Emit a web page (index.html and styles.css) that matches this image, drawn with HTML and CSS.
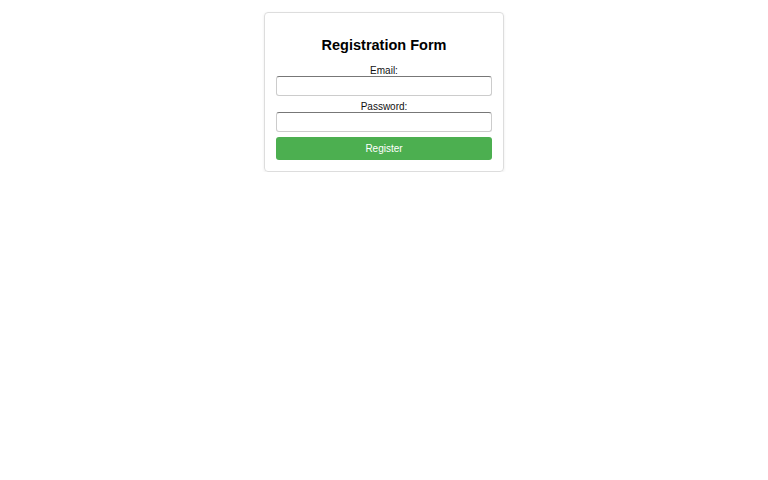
FILE: index.html
```html
<!DOCTYPE html>
<html lang="en">
<head>
  <meta charset="UTF-8">
  <meta name="viewport" content="width=device-width, initial-scale=1.0">
  <title>Registration Form</title>
  <link rel="stylesheet" href="styles.css">
</head>
<body>
  <div class="container">
    <h1>Registration Form</h1>
    <form class="form" onsubmit="return false;">
      <label for="email">Email:</label>
      <input type="email" id="email" />
      <label for="password">Password:</label>
      <input type="password" id="password" />
      <button type="submit">Register</button>
    </form>
  </div>
</body>
</html>
```

FILE: styles.css
```css
body {
  font-family: "Liberation Sans", Arial, sans-serif;
  margin: 0;
  padding-top: 12px;
  display: flex;
  justify-content: center;
  background-color: #fff;
}

.container {
  width: 216px;
  padding: 11px;
  border: 1px solid #ddd;
  border-radius: 4px;
  box-shadow: 0 1px 3px rgba(0, 0, 0, 0.08);
  text-align: center;
}

h1 {
  font-size: 14.5px;
  line-height: 17px;
  margin: 13px 0 10px;
}

.form {
  display: flex;
  flex-direction: column;
}

label {
  font-size: 10px;
  line-height: 11px;
  padding-top: 1px;
  color: #111;
}

input {
  height: 20px;
  box-sizing: border-box;
  margin: 0 0 4px;
  padding: 2px 4px;
  border: 1px solid #ccc;
  border-top-color: #777;
  border-radius: 3px;
}

button {
  margin-top: 1px;
  height: 23px;
  background-color: #4CAF50;
  color: white;
  border: none;
  border-radius: 3px;
  font-family: inherit;
  font-size: 10px;
  cursor: pointer;
}
```
